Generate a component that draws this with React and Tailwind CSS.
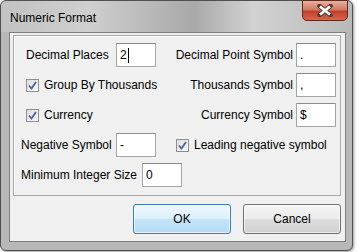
const font = { fontFamily: '"Liberation Sans", Arial, sans-serif' };

const Field = ({ value, caret }) => (
  <div className="w-[40px] h-[24px] bg-white border border-[#a5a5a5] border-t-[#8c8c8c] flex items-center pl-[3px] text-[12px] text-black">
    <span>{value}</span>
    {caret && <span className="w-px h-[15px] bg-black ml-px" />}
  </div>
);

const Check = () => (
  <span className="w-[13px] h-[13px] border border-[#8e8f8f] bg-gradient-to-br from-[#dcdcdc] to-[#fbfbfb] flex items-center justify-center shrink-0">
    <svg width="9" height="9" viewBox="0 0 9 9">
      <path d="M1 4.5 L3.5 7.5 L8 1" fill="none" stroke="#4c61a0" strokeWidth="1.8" />
    </svg>
  </span>
);

const RightField = ({ label, value }) => (
  <div className="flex items-center justify-end gap-[3px]">
    <span>{label}</span>
    <Field value={value} />
  </div>
);

export default function App() {
  return (
    <div className="w-[357px] h-[252px] bg-white overflow-hidden" style={font}>
      <div className="w-[353px] h-[251px] rounded-[6px] border border-[#505050] bg-[#b8b8b8] flex flex-col pl-[8px] pr-[6px] pb-[8px] relative shadow-[1px_1px_3px_rgba(0,0,0,0.4)]">
        {/* title bar */}
        <div className="h-[31px] -ml-[8px] -mr-[6px] pl-[9px] rounded-t-[6px] bg-[linear-gradient(90deg,#c2c2c2_0%,#cfcfcf_25%,#a9a9a9_55%,#d2d2d2_72%,#b9b9b9_100%)] flex items-start pt-[11px]">
          <span className="text-[12px] text-black leading-none">Numeric Format</span>
        </div>
        <div className="absolute top-[-1px] left-[301px] w-[46px] h-[21px] rounded-b-[5px] border border-[#5f2a20] bg-[linear-gradient(180deg,#eab0a0_0%,#d47a62_45%,#c2402a_55%,#d9654a_100%)] flex items-center justify-center">
          <svg width="16" height="13" viewBox="0 0 16 13">
            <path d="M2.5 2 L13.5 11 M13.5 2 L2.5 11" stroke="#5a3a34" strokeWidth="4.6" strokeLinecap="round" />
            <path d="M3 2.5 L13 10.5 M13 2.5 L3 10.5" stroke="#ffffff" strokeWidth="2.8" />
          </svg>
        </div>

        {/* client area */}
        <div className="flex-1 border border-[#7e7e7e] bg-[#f0f0f0] flex flex-col text-[12px] text-black">
          <div className="ml-[3px] mt-[2px] w-[328px] h-[161px] border border-[#a8a8a8] shadow-[inset_1px_1px_0_#ffffff] flex flex-col gap-[6px] pt-[7px] pl-[7px] pr-[4px]">
            <div className="h-[24px] flex items-center justify-between">
              <div className="flex items-center pl-[5px]">
                <span className="w-[90px]">Decimal Places</span>
                <Field value="2" caret />
              </div>
              <RightField label="Decimal Point Symbol" value="." />
            </div>
            <div className="h-[24px] flex items-center justify-between">
              <div className="flex items-center gap-[5px] pl-[5px]">
                <Check />
                <span>Group By Thousands</span>
              </div>
              <RightField label="Thousands Symbol" value="," />
            </div>
            <div className="h-[24px] flex items-center justify-between">
              <div className="flex items-center gap-[5px] pl-[5px]">
                <Check />
                <span>Currency</span>
              </div>
              <RightField label="Currency Symbol" value="$" />
            </div>
            <div className="h-[24px] flex items-center">
              <span className="w-[95px]">Negative Symbol</span>
              <Field value="-" />
              <div className="flex items-center gap-[5px] ml-[20px]">
                <Check />
                <span>Leading negative symbol</span>
              </div>
            </div>
            <div className="h-[24px] flex items-center">
              <span className="w-[121px]">Minimum Integer Size</span>
              <Field value="0" />
            </div>
          </div>

          <div className="flex justify-end gap-[12px] mt-[8px] pr-[4px]">
            <button className="w-[98px] h-[30px] rounded-[3px] border border-[#3c7fb1] bg-[linear-gradient(180deg,#eef8fe_0%,#dcf0fc_48%,#c3e4f8_52%,#b3dbf4_100%)] shadow-[inset_0_0_0_1px_rgba(255,255,255,0.6)] text-[12px]">
              OK
            </button>
            <button className="w-[98px] h-[30px] rounded-[3px] border border-[#707070] bg-[linear-gradient(180deg,#f4f4f4_0%,#ebebeb_48%,#dddddd_52%,#d0d0d0_100%)] shadow-[inset_0_0_0_1px_rgba(255,255,255,0.6)] text-[12px]">
              Cancel
            </button>
          </div>
        </div>
      </div>
    </div>
  );
}
